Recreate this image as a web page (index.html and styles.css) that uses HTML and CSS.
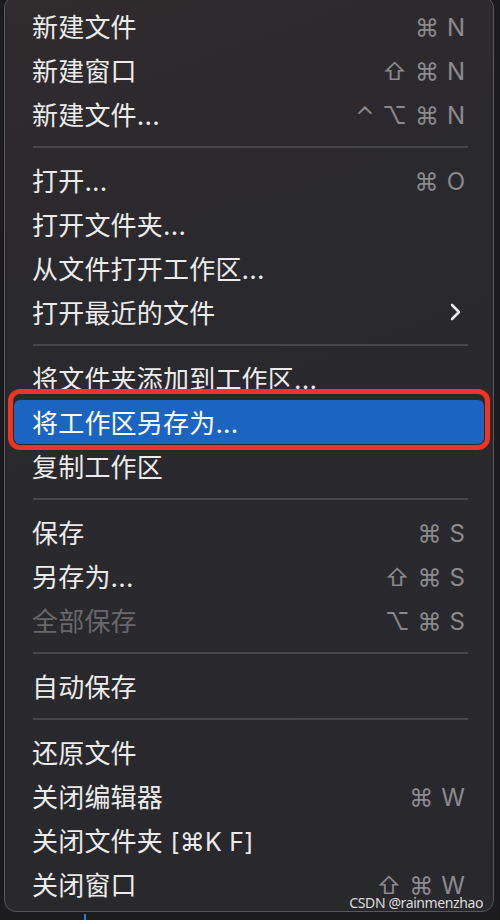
FILE: index.html
```html
<!DOCTYPE html>
<html lang="zh-CN">

<head>
    <meta charset="UTF-8">
    <meta name="viewport" content="width=device-width, initial-scale=1.0">
    <title>文件菜单</title>
    <link rel="stylesheet" href="styles.css">
</head>

<body>
    <div class="menu">
        <div class="item"><span class="label">新建文件</span><span class="keys"><i>⌘</i><i>N</i></span></div>
        <div class="item"><span class="label">新建窗口</span><span class="keys"><i>⇧</i><i>⌘</i><i>N</i></span></div>
        <div class="item"><span class="label">新建文件...</span><span class="keys"><i>⌃</i><i>⌥</i><i>⌘</i><i>N</i></span></div>
        <div class="sep"></div>

        <div class="item"><span class="label">打开...</span><span class="keys"><i>⌘</i><i>O</i></span></div>
        <div class="item"><span class="label">打开文件夹...</span></div>
        <div class="item"><span class="label">从文件打开工作区...</span></div>
        <div class="item">
            <span class="label">打开最近的文件</span>
            <svg class="chevron" width="14" height="20" viewBox="0 0 14 20">
                <polyline points="3,3 10,10 3,17" fill="none" stroke="#ececec" stroke-width="2.6" stroke-linecap="round" stroke-linejoin="round"/>
            </svg>
        </div>
        <div class="sep"></div>

        <div class="item"><span class="label">将文件夹添加到工作区...</span></div>
        <div class="item active"><span class="label">将工作区另存为...</span></div>
        <div class="item"><span class="label">复制工作区</span></div>
        <div class="sep"></div>

        <div class="item"><span class="label">保存</span><span class="keys"><i>⌘</i><i>S</i></span></div>
        <div class="item"><span class="label">另存为...</span><span class="keys"><i>⇧</i><i>⌘</i><i>S</i></span></div>
        <div class="item disabled"><span class="label">全部保存</span><span class="keys"><i>⌥</i><i>⌘</i><i>S</i></span></div>
        <div class="sep"></div>

        <div class="item"><span class="label">自动保存</span></div>
        <div class="sep"></div>

        <div class="item"><span class="label">还原文件</span></div>
        <div class="item"><span class="label">关闭编辑器</span><span class="keys"><i>⌘</i><i>W</i></span></div>
        <div class="item"><span class="label">关闭文件夹 <span class="latin">[⌘K F]</span></span></div>
        <div class="item"><span class="label">关闭窗口</span><span class="keys"><i>⇧</i><i>⌘</i><i>W</i></span></div>

        <div class="watermark">CSDN @rainmenzhao</div>
    </div>
    <div class="cursor"></div>
</body>

</html>
```

FILE: styles.css
```css
body {
    margin: 0;
    background-color: #1c1c1e;
    font-family: "Inter", "Noto Sans CJK SC", sans-serif;
    overflow: hidden;
}

.menu {
    position: relative;
    width: 488px;
    margin: -4px 0 0 4px;
    padding: 7px 0 5px;
    border: 1px solid #57565b;
    border-radius: 12px;
    background: linear-gradient(160deg, #302b2d 0%, #2a292d 30%, #29282c 100%);
}

.item {
    position: relative;
    display: flex;
    align-items: center;
    justify-content: space-between;
    height: 44px;
    margin: 0 9px;
    padding: 0 19px 0 18px;
    color: #ebebeb;
    font-size: 26px;
    line-height: 40px;
}

.item.disabled {
    color: #68676b;
}

.item.disabled .keys {
    color: #8a898e;
}

.item.active {
    background-color: #1b65c1;
    border-radius: 6px;
    color: #ffffff;
}

/* red annotation box around the highlighted row */
.item.active::after {
    content: "";
    position: absolute;
    left: -6px;
    right: -6px;
    top: -11px;
    bottom: -6px;
    border: 5px solid #ef3422;
    border-radius: 12px;
}

.label {
    white-space: nowrap;
    letter-spacing: 0.2px;
    padding-top: 4px;
}

.latin {
    font-family: "Inter", "DejaVu Sans", sans-serif;
    font-size: 25px;
}

.keys {
    display: flex;
    align-items: center;
    gap: 8px;
    padding-top: 4px;
    color: #8b8a8f;
    font-family: "Inter", "DejaVu Sans", sans-serif;
    font-size: 24px;
    line-height: 24px;
}

.keys i {
    font-style: normal;
}

.chevron {
    margin-right: 2px;
}

.sep {
    height: 2px;
    margin: 10px 25px 10px 28px;
    background-color: #47464b;
}

.watermark {
    position: absolute;
    right: 10px;
    bottom: 1px;
    color: #dcdcdc;
    font-family: "Noto Sans", sans-serif;
    font-size: 14px;
    line-height: 14px;
    letter-spacing: -0.4px;
}

.cursor {
    width: 2px;
    height: 10px;
    margin: 2px 0 0 84px;
    background-color: #1f7ad8;
}
```
